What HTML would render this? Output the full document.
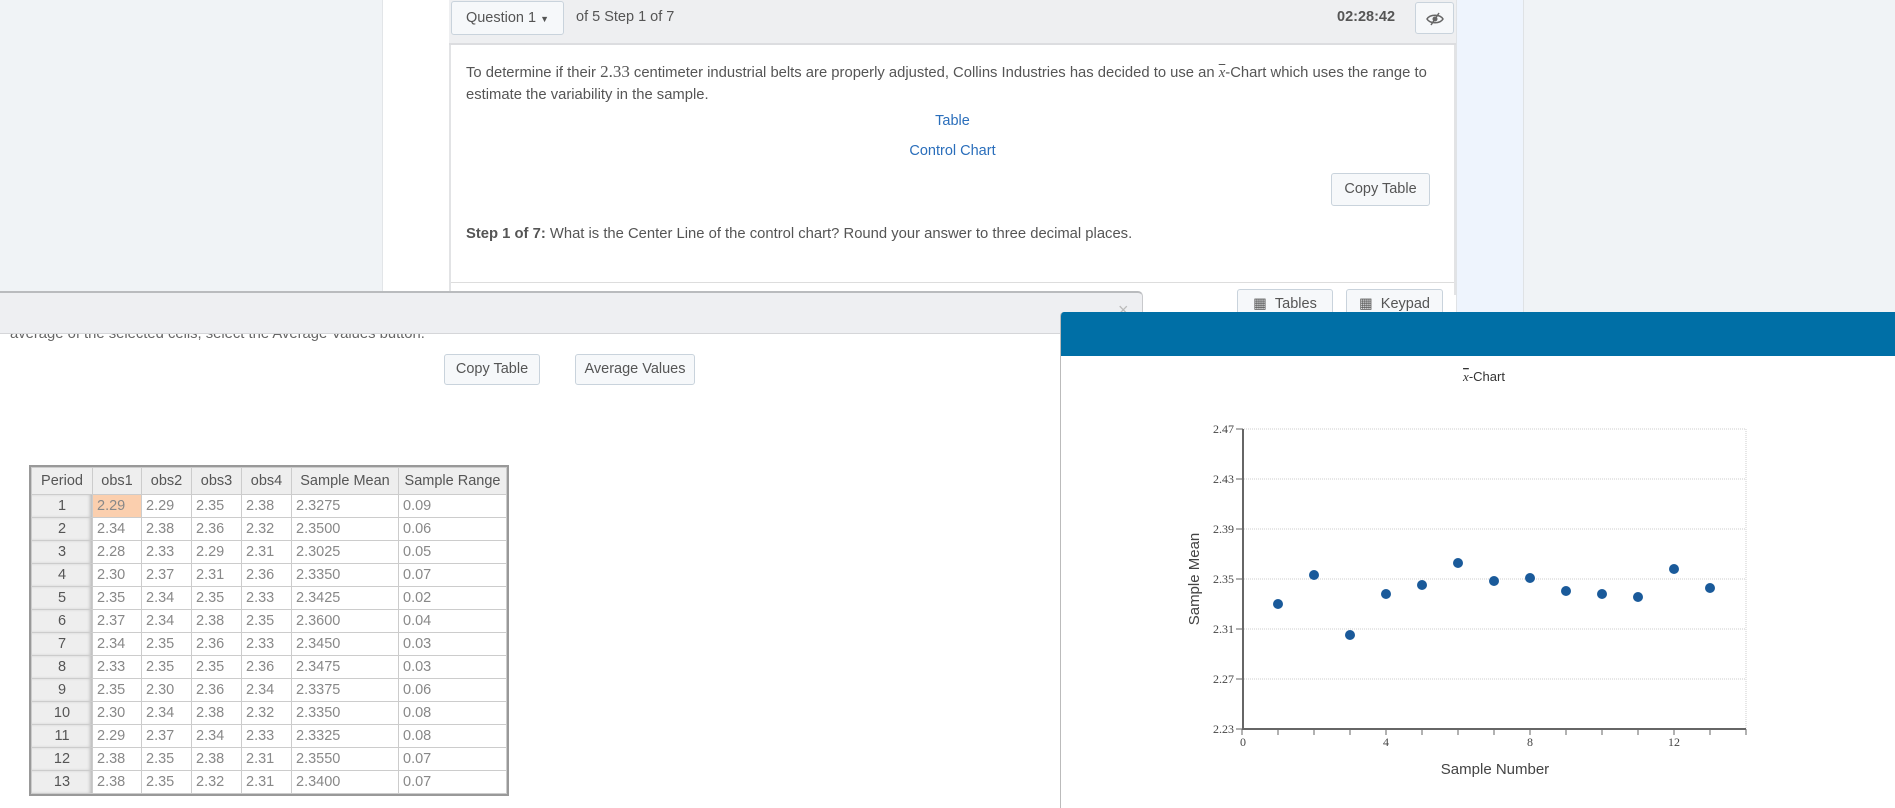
<!DOCTYPE html>
<html><head><meta charset="utf-8"><style>
*{box-sizing:border-box;margin:0;padding:0}
body{width:1895px;height:808px;overflow:hidden;background:#fff;font-family:"Liberation Sans",sans-serif;color:#555;position:relative}
.abs{position:absolute}
.btn{position:absolute;background:#f6f8fa;border:1px solid #c9d3dc;border-radius:3px;color:#555;font-size:14.5px;text-align:center}
table{border-collapse:collapse;font-size:14.5px}
td,th{border:1px solid #ccc;height:23px;padding:0 4px;font-weight:normal;text-align:left;color:#888}
th{background:#eee;color:#555;height:27px;text-align:center}
td.p{background:#eee;color:#555;text-align:center;box-shadow:inset -3px 0 3px -1px #bbb}
</style></head><body>
<div class="abs" style="left:0;top:0;width:383px;height:312px;background:#f0f3f6;border-right:1px solid #e2e5e8"></div>
<div class="abs" style="left:1456px;top:0;width:67px;height:312px;background:#eef4fd;border-left:1px solid #e0e3e6"></div>
<div class="abs" style="left:1523px;top:0;width:372px;height:312px;background:#f0f3f6;border-left:1px solid #dfe2e5"></div>
<div class="abs" style="left:449px;top:0;width:1007px;height:45px;background:#eeeff1;border-bottom:2px solid #dcdde0"></div>
<div class="abs" style="left:449px;top:45px;width:1007px;height:250px;border-left:2px solid #e2e3e5;border-right:2px solid #e2e3e5"></div>
<div class="abs" style="left:451px;top:282px;width:1003px;height:1px;background:#ddd"></div>
<div class="btn" style="left:451px;top:1px;width:113px;height:34px;line-height:32px">Question 1 <span style="font-size:9px">▼</span></div>
<div class="abs" style="left:576px;top:9px;font-size:14.5px">of 5 Step 1 of 7</div>
<div class="abs" style="left:1337px;top:9px;font-size:14.5px;font-weight:bold;color:#555">02:28:42</div>
<div class="btn" style="left:1415px;top:2px;width:39px;height:32px"><svg width="20" height="14" viewBox="0 0 20 14" style="margin-top:9px"><path d="M2 7C5 2 15 2 18 7C15 12 5 12 2 7Z" fill="none" stroke="#666" stroke-width="1.5"/><circle cx="10" cy="7" r="2.5" fill="#666"/><line x1="6" y1="13" x2="14" y2="1" stroke="#666" stroke-width="1.5"/></svg></div>
<div class="abs" style="left:466px;top:61px;font-size:14.8px;line-height:22px;width:990px">To determine if their <span style="font-family:'Liberation Serif',serif;font-size:17px">2.33</span> centimeter industrial belts are properly adjusted, Collins Industries has decided to use an <span style="font-family:'Liberation Serif',serif;font-style:italic;text-decoration:overline">x</span>-Chart which uses the range to<br>estimate the variability in the sample.</div>
<div class="abs" style="left:449px;width:1007px;top:113px;text-align:center;color:#2a6ebb;font-size:14.5px">Table</div>
<div class="abs" style="left:449px;width:1007px;top:143px;text-align:center;color:#2a6ebb;font-size:14.5px">Control Chart</div>
<div class="btn" style="left:1331px;top:173px;width:99px;height:33px;line-height:31px">Copy Table</div>
<div class="abs" style="left:466px;top:226px;font-size:14.8px"><b>Step 1 of 7:</b> What is the Center Line of the control chart? Round your answer to three decimal places.</div>
<div class="btn" style="left:1237px;top:289px;width:96px;height:30px;line-height:28px">▦ &nbsp;Tables</div>
<div class="btn" style="left:1346px;top:289px;width:97px;height:30px;line-height:28px">▦ &nbsp;Keypad</div>
<div class="abs" style="left:10px;top:326px;font-size:14.8px;color:#666">average of the selected cells, select the Average Values button.</div>
<div class="abs" style="left:0;top:291px;width:1143px;height:43px;background:#eeeff2;border-top:2px solid #b9bbbe;border-right:1px solid #c8c9cc;border-bottom:1px solid #d5d6d9;border-top-right-radius:5px"></div>
<div class="abs" style="left:1118px;top:300px;font-size:18px;color:#bbb">×</div>
<div class="btn" style="left:444px;top:354px;width:96px;height:31px;line-height:29px">Copy Table</div>
<div class="btn" style="left:575px;top:354px;width:120px;height:31px;line-height:29px">Average Values</div>
<div class="abs" style="left:29px;top:465px;border:2px solid #999">
<table>
<tr><th style="width:61px">Period</th><th style="width:49px">obs1</th><th style="width:50px">obs2</th><th style="width:50px">obs3</th><th style="width:50px">obs4</th><th style="width:107px">Sample Mean</th><th style="width:108px">Sample Range</th></tr>
<tr><td class="p">1</td><td style="background:#fbcfae">2.29</td><td>2.29</td><td>2.35</td><td>2.38</td><td>2.3275</td><td>0.09</td></tr>
<tr><td class="p">2</td><td>2.34</td><td>2.38</td><td>2.36</td><td>2.32</td><td>2.3500</td><td>0.06</td></tr>
<tr><td class="p">3</td><td>2.28</td><td>2.33</td><td>2.29</td><td>2.31</td><td>2.3025</td><td>0.05</td></tr>
<tr><td class="p">4</td><td>2.30</td><td>2.37</td><td>2.31</td><td>2.36</td><td>2.3350</td><td>0.07</td></tr>
<tr><td class="p">5</td><td>2.35</td><td>2.34</td><td>2.35</td><td>2.33</td><td>2.3425</td><td>0.02</td></tr>
<tr><td class="p">6</td><td>2.37</td><td>2.34</td><td>2.38</td><td>2.35</td><td>2.3600</td><td>0.04</td></tr>
<tr><td class="p">7</td><td>2.34</td><td>2.35</td><td>2.36</td><td>2.33</td><td>2.3450</td><td>0.03</td></tr>
<tr><td class="p">8</td><td>2.33</td><td>2.35</td><td>2.35</td><td>2.36</td><td>2.3475</td><td>0.03</td></tr>
<tr><td class="p">9</td><td>2.35</td><td>2.30</td><td>2.36</td><td>2.34</td><td>2.3375</td><td>0.06</td></tr>
<tr><td class="p">10</td><td>2.30</td><td>2.34</td><td>2.38</td><td>2.32</td><td>2.3350</td><td>0.08</td></tr>
<tr><td class="p">11</td><td>2.29</td><td>2.37</td><td>2.34</td><td>2.33</td><td>2.3325</td><td>0.08</td></tr>
<tr><td class="p">12</td><td>2.38</td><td>2.35</td><td>2.38</td><td>2.31</td><td>2.3550</td><td>0.07</td></tr>
<tr><td class="p">13</td><td>2.38</td><td>2.35</td><td>2.32</td><td>2.31</td><td>2.3400</td><td>0.07</td></tr>
</table></div>
<div class="abs" style="left:1060px;top:312px;width:835px;height:496px;background:#fff;border-left:1px solid #bbb;border-top-left-radius:4px;overflow:hidden">
<div style="height:44px;background:#006fa6"></div></div>
<svg class="abs" style="left:0;top:0" width="1895" height="808" viewBox="0 0 1895 808">
<g font-family="Liberation Serif,serif" font-size="12" fill="#444" text-anchor="end">
<g stroke="#ccc" stroke-dasharray="1,1">
<line x1="1244" y1="429" x2="1746" y2="429"/><line x1="1244" y1="479" x2="1746" y2="479"/><line x1="1244" y1="529" x2="1746" y2="529"/><line x1="1244" y1="579" x2="1746" y2="579"/><line x1="1244" y1="629" x2="1746" y2="629"/><line x1="1244" y1="679" x2="1746" y2="679"/><line x1="1746" y1="429" x2="1746" y2="729"/></g>
<g stroke="#666" stroke-width="2"><line x1="1243" y1="429" x2="1243" y2="730"/><line x1="1242" y1="729" x2="1746" y2="729"/></g>
<g stroke="#666"><line x1="1236" y1="429" x2="1243" y2="429"/><line x1="1236" y1="479" x2="1243" y2="479"/><line x1="1236" y1="529" x2="1243" y2="529"/><line x1="1236" y1="579" x2="1243" y2="579"/><line x1="1236" y1="629" x2="1243" y2="629"/><line x1="1236" y1="679" x2="1243" y2="679"/><line x1="1236" y1="729" x2="1243" y2="729"/>
<path d="M1242 729v6M1278 729v6M1314 729v6M1350 729v6M1386 729v6M1422 729v6M1458 729v6M1494 729v6M1530 729v6M1566 729v6M1602 729v6M1638 729v6M1674 729v6M1710 729v6M1746 729v6"/></g>
<text x="1234" y="433">2.47</text><text x="1234" y="483">2.43</text><text x="1234" y="533">2.39</text><text x="1234" y="583">2.35</text><text x="1234" y="633">2.31</text><text x="1234" y="683">2.27</text><text x="1234" y="733">2.23</text>
<g text-anchor="middle"><text x="1243" y="746">0</text><text x="1386" y="746">4</text><text x="1530" y="746">8</text><text x="1674" y="746">12</text></g>
</g>
<g fill="#1a5a9a">
<circle cx="1278" cy="604" r="5"/><circle cx="1314" cy="575" r="5"/><circle cx="1350" cy="635" r="5"/><circle cx="1386" cy="594" r="5"/><circle cx="1422" cy="585" r="5"/><circle cx="1458" cy="563" r="5"/><circle cx="1494" cy="581" r="5"/><circle cx="1530" cy="578" r="5"/><circle cx="1566" cy="591" r="5"/><circle cx="1602" cy="594" r="5"/><circle cx="1638" cy="597" r="5"/><circle cx="1674" cy="569" r="5"/><circle cx="1710" cy="588" r="5"/>
</g>
<text x="1484" y="381" font-family="Liberation Sans,sans-serif" font-size="13" fill="#333" text-anchor="middle"><tspan font-family="Liberation Serif,serif" font-style="italic" text-decoration="overline">x</tspan>-Chart</text>
<text x="1495" y="774" font-family="Liberation Sans,sans-serif" font-size="15" fill="#444" text-anchor="middle">Sample Number</text>
<text transform="translate(1199,579) rotate(-90)" font-family="Liberation Sans,sans-serif" font-size="15" fill="#444" text-anchor="middle">Sample Mean</text>
</svg>
</body></html>
